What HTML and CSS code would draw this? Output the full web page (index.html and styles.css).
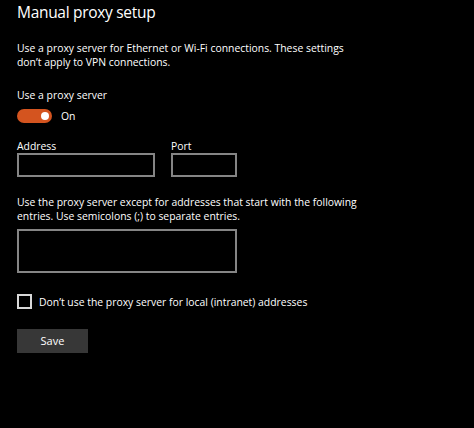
FILE: index.html
```html
<!DOCTYPE html>
<html lang="en">
<head>
<meta charset="utf-8">
<title>Manual proxy setup</title>
<link rel="stylesheet" href="styles.css">
</head>
<body>
<main class="page">
  <h1 class="title">Manual proxy setup</h1>
  <p class="desc">Use a proxy server for Ethernet or Wi-Fi connections. These settings<br>don’t apply to VPN connections.</p>
  <div class="label">Use a proxy server</div>
  <div class="toggle-row">
    <span class="toggle"><span class="knob"></span></span>
    <span class="toggle-text">On</span>
  </div>
  <div class="fields">
    <div class="field">
      <div class="label">Address</div>
      <div class="input input-address"></div>
    </div>
    <div class="field">
      <div class="label">Port</div>
      <div class="input input-port"></div>
    </div>
  </div>
  <p class="desc desc-ex">Use the proxy server except for addresses that start with the following<br>entries. Use semicolons (;) to separate entries.</p>
  <div class="input textarea"></div>
  <div class="check-row">
    <span class="checkbox"></span>
    <span class="check-text">Don’t use the proxy server for local (intranet) addresses</span>
  </div>
  <div class="button">Save</div>
</main>
</body>
</html>
```

FILE: styles.css
```css
html, body {
  margin: 0;
  background: #000;
}
.page {
  padding: 0 17px;
  color: #fff;
  font-family: "Open Sans", "Noto Sans", sans-serif;
  font-size: 10.4px;
  line-height: 14px;
}
.title {
  margin: 0;
  font-size: 15.5px;
  font-weight: 400;
  letter-spacing: -0.3px;
  line-height: 24px;
}
.desc {
  margin: 17px 0 0;
}
.label {
  margin-top: 19px;
}
.toggle-row {
  display: flex;
  align-items: center;
  gap: 9px;
  margin-top: 7px;
  height: 14px;
}
.toggle {
  display: flex;
  align-items: center;
  justify-content: flex-end;
  width: 35px;
  height: 14px;
  border-radius: 7px;
  background: #d4541f;
  padding-right: 3px;
  box-sizing: border-box;
}
.knob {
  width: 8px;
  height: 8px;
  border-radius: 50%;
  background: #fff;
}
.fields {
  display: flex;
  gap: 16px;
  margin-top: 16px;
}
.fields .label {
  margin-top: 0;
}
.input {
  box-sizing: border-box;
  border: 2px solid #858585;
  height: 24px;
}
.input-address {
  width: 138px;
}
.input-port {
  width: 66px;
}
.desc-ex {
  margin-top: 18px;
}
.textarea {
  margin-top: 6px;
  width: 220px;
  height: 44px;
}
.check-row {
  display: flex;
  align-items: center;
  gap: 7px;
  margin-top: 21px;
}
.checkbox {
  box-sizing: border-box;
  width: 15px;
  height: 15px;
  border: 2px solid #d8d8d8;
}
.button {
  margin-top: 20px;
  width: 71px;
  height: 24px;
  background: #373737;
  display: flex;
  align-items: center;
  justify-content: center;
  font-size: 11px;
}
```
